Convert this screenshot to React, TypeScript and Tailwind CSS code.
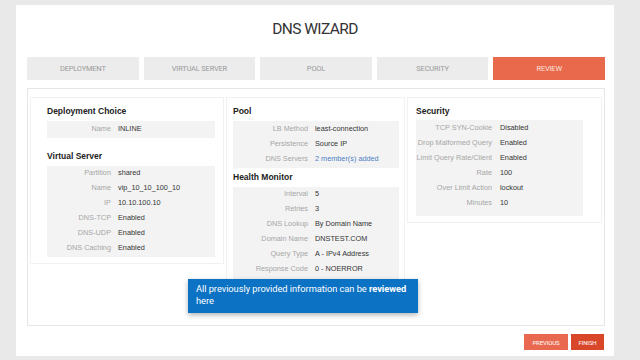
import type { ReactNode } from 'react'

type Row = { label: string; value: ReactNode }

const steps = ['DEPLOYMENT', 'VIRTUAL SERVER', 'POOL', 'SECURITY', 'REVIEW']

const deployment: Row[] = [{ label: 'Name', value: 'INLINE' }]

const virtualServer: Row[] = [
  { label: 'Partition', value: 'shared' },
  { label: 'Name', value: 'vip_10_10_100_10' },
  { label: 'IP', value: '10.10.100.10' },
  { label: 'DNS-TCP', value: 'Enabled' },
  { label: 'DNS-UDP', value: 'Enabled' },
  { label: 'DNS Caching', value: 'Enabled' },
]

const pool: Row[] = [
  { label: 'LB Method', value: 'least-connection' },
  { label: 'Persistence', value: 'Source IP' },
  { label: 'DNS Servers', value: <span className="text-[#4d7fc4]">2 member(s) added</span> },
]

const healthMonitor: Row[] = [
  { label: 'Interval', value: '5' },
  { label: 'Retries', value: '3' },
  { label: 'DNS Lookup', value: 'By Domain Name' },
  { label: 'Domain Name', value: 'DNSTEST.COM' },
  { label: 'Query Type', value: 'A - IPv4 Address' },
  { label: 'Response Code', value: '0 - NOERROR' },
]

const security: Row[] = [
  { label: 'TCP SYN-Cookie', value: 'Disabled' },
  { label: 'Drop Malformed Query', value: 'Enabled' },
  { label: 'Limit Query Rate/Client', value: 'Enabled' },
  { label: 'Rate', value: '100' },
  { label: 'Over Limit Action', value: 'lockout' },
  { label: 'Minutes', value: '10' },
]

function Section({
  title,
  rows,
  labelWidth,
  first,
  extra,
}: {
  title: string
  rows: Row[]
  labelWidth: string
  first?: boolean
  extra?: string
}) {
  return (
    <div className={first ? '' : 'mt-[12px]'}>
      <h3 className="mb-[4px] text-[8.5px] font-bold leading-[12px] text-[#222]">{title}</h3>
      <div className={`bg-[#f3f3f3] pt-[0.5px] ${extra ?? 'pb-[1px]'}`}>
        {rows.map((r, i) => (
          <div key={i} className="flex h-[15px] items-center text-[7.3px]">
            <span className={`${labelWidth} shrink-0 text-right text-[#a6a6a6]`}>{r.label}</span>
            <span className="ml-[7px] text-[#333]">{r.value}</span>
          </div>
        ))}
      </div>
    </div>
  )
}

export default function App() {
  return (
    <div
      className="h-[360px] w-[640px] overflow-hidden bg-[#e9e9e9] pt-[5px]"
      style={{ fontFamily: '"Liberation Sans", Arial, sans-serif' }}
    >
      <div className="ml-[16px] h-[351px] w-[598px] bg-white px-[11px]">
        <h1
          className="pt-[15px] text-center text-[15.5px] leading-[18px] tracking-[-0.6px] text-[#333]"
          style={{ fontFamily: 'Roboto, sans-serif' }}
        >
          DNS WIZARD
        </h1>

        {/* step tabs */}
        <div className="mt-[19px] grid w-[578px] grid-cols-5 gap-[5px]" style={{ fontFamily: 'Roboto, sans-serif' }}>
          {steps.map((s) => (
            <div
              key={s}
              className={`flex h-[23px] items-center justify-center text-[7.5px] tracking-[-0.2px] ${
                s === 'REVIEW' ? 'bg-[#e8694b] text-[#fde3dc]' : 'bg-[#ececec] text-[#9a9a9a]'
              }`}
            >
              {s}
            </div>
          ))}
        </div>

        {/* review panel */}
        <div className="relative mt-[8px] h-[238px] w-[578px] overflow-hidden border border-[#e6e6e6] pl-[2px] pt-[8px]">
          <div className="flex items-start gap-[2px]">
            <div className="w-[194px] border border-[#f1f1f1] pb-[6px] pl-[16px] pr-[8px] pt-[7px]">
              <Section first title="Deployment Choice" rows={deployment} labelWidth="w-[64px]" />
              <Section title="Virtual Server" rows={virtualServer} labelWidth="w-[64px]" />
            </div>
            <div className="w-[179px] border border-[#f1f1f1] pb-[6px] pl-[6px] pr-[5px] pt-[7px]">
              <Section first title="Pool" rows={pool} labelWidth="w-[75px]" />
              <div className="-mt-[9px]">
                <Section title="Health Monitor" rows={healthMonitor} labelWidth="w-[75px]" extra="pb-[20px]" />
              </div>
            </div>
            <div className="w-[195px] border border-[#f1f1f1] pb-[6px] pl-[8px] pr-[18px] pt-[7px]">
              <h3 className="mb-[3px] text-[8.5px] font-bold leading-[12px] text-[#222]">Security</h3>
              <div className="bg-[#f3f3f3] pb-[5px] pt-[0.5px]">
                {security.map((r, i) => (
                  <div key={i} className="flex h-[15px] items-center text-[7.3px]">
                    <span className="w-[76px] shrink-0 text-right text-[#a6a6a6]">{r.label}</span>
                    <span className="ml-[8px] text-[#333]">{r.value}</span>
                  </div>
                ))}
              </div>
            </div>
          </div>

          {/* tooltip */}
          <div
            className="absolute left-[160px] top-[190px] h-[34px] w-[230px] whitespace-nowrap bg-[#0b72c4] px-[8px] pt-[4px] text-[9.3px] leading-[12px] tracking-[-0.05px] text-white shadow-[0_2px_5px_rgba(0,0,0,0.3)]"
            style={{ fontFamily: 'Roboto, sans-serif' }}
          >
            All previously provided information can be <b className="font-bold">reviewed</b>
            <br />
            here
          </div>
        </div>

        {/* footer buttons */}
        <div className="mt-[8px] flex w-[578px] justify-end gap-[3px] pr-[1px]" style={{ fontFamily: 'Roboto, sans-serif' }}>
          <button className="h-[16px] w-[44px] bg-[#e8694f] text-[6px] tracking-[-0.1px] text-white">PREVIOUS</button>
          <button className="h-[16px] w-[33px] bg-[#d9472b] text-[6px] tracking-[-0.1px] text-white">FINISH</button>
        </div>
      </div>
    </div>
  )
}
